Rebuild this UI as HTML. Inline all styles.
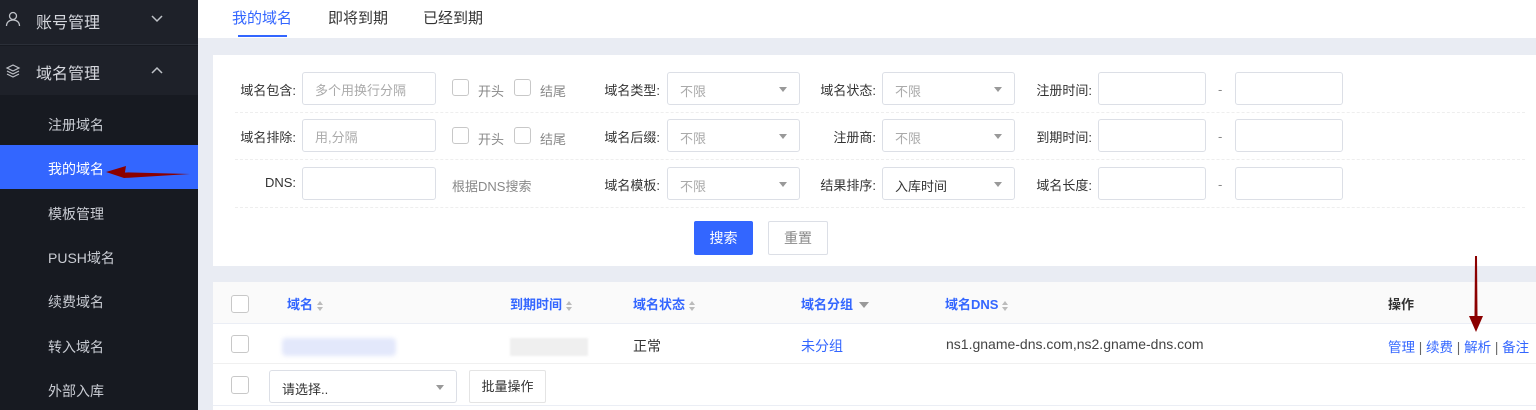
<!DOCTYPE html>
<html><head><meta charset="utf-8"><style>
*{margin:0;padding:0;box-sizing:border-box}
body{width:1536px;height:410px;overflow:hidden;background:#e9ecf3;font-family:"Liberation Sans","Noto Sans CJK SC",sans-serif;font-size:13px;color:#333;position:relative}
.a{position:absolute}
.side{left:0;top:0;width:198px;height:410px;background:#171a21}
.sh{left:0;width:198px;background:#1e2129;color:#d6d8de;font-size:16px}
.si{left:48px;color:#c9ccd3;font-size:14px}
.top{left:198px;top:0;width:1338px;height:38px;background:#fff}
.card{background:#fff}
.lb{font-size:13px;color:#333;text-align:right}
.in{border:1px solid #dcdfe6;border-radius:3px;background:#fff;height:33px;color:#aaa;font-size:13px;padding:7px 12px}
.cb{width:17px;height:17px;border:1px solid #c8c8c8;border-radius:3px;background:#fff}
.sel{border:1px solid #dcdfe6;border-radius:3px;height:33px;background:#fff;color:#aaa;padding:8px 12px}
.sel:after{content:"";position:absolute;right:12px;top:14px;border:4px solid transparent;border-top:5px solid #999}
.th{color:#3366ff;font-weight:bold;font-size:13px}
.sort{display:inline-block;width:0;height:0;vertical-align:middle;margin-left:4px;border:3px solid transparent;border-bottom:4px solid #bbb;position:relative;top:-4px}
.sort:after{content:"";position:absolute;left:-3px;top:6px;border:3px solid transparent;border-top:4px solid #bbb}
</style></head><body>
<div class="a side"></div>
<div class="a sh" style="top:0;height:45px;border-bottom:1px solid #2b2f38"></div>
<div class="a sh" style="top:46px;height:49px"></div>
<svg class="a" style="left:5px;top:11px" width="16" height="16" viewBox="0 0 16 16" fill="none" stroke="#bfc2c8" stroke-width="1.3"><circle cx="8" cy="5" r="3.5"/><path d="M1.5 15c0-4 3-6 6.5-6s6.5 2 6.5 6"/></svg>
<div class="a" style="left:36px;top:9px;color:#d6d8de;font-size:16px">账号管理</div>
<svg class="a" style="left:150px;top:14px" width="14" height="10"><path d="M2 2l5 5 5-5" stroke="#bfc2c8" stroke-width="1.5" fill="none"/></svg>
<svg class="a" style="left:5px;top:63px" width="16" height="16" viewBox="0 0 16 16" fill="none" stroke="#bfc2c8" stroke-width="1.2"><path d="M8 2l6 3-6 3-6-3z"/><path d="M2 8l6 3 6-3"/><path d="M2 11l6 3 6-3"/></svg>
<div class="a" style="left:36px;top:60px;color:#d6d8de;font-size:16px">域名管理</div>
<svg class="a" style="left:150px;top:66px" width="14" height="10"><path d="M2 7l5-5 5 5" stroke="#bfc2c8" stroke-width="1.5" fill="none"/></svg>
<div class="a si" style="top:115px">注册域名</div>
<div class="a" style="left:0;top:145px;width:198px;height:44px;background:#3366ff"></div>
<div class="a si" style="top:159px;color:#fff">我的域名</div>
<svg class="a" style="left:102px;top:164px" width="92" height="16"><path d="M8 8 L88 10 L22 14 Z M4 8 L24 2 L22 14 Z" fill="#8b0000"/></svg>
<div class="a si" style="top:204px">模板管理</div>
<div class="a si" style="top:248px">PUSH域名</div>
<div class="a si" style="top:292px">续费域名</div>
<div class="a si" style="top:337px">转入域名</div>
<div class="a si" style="top:381px">外部入库</div>

<div class="a top"></div>
<div class="a" style="left:232px;top:7px;font-size:15px;color:#3366ff">我的域名</div>
<div class="a" style="left:238px;top:35px;width:49px;height:2px;background:#3366ff"></div>
<div class="a" style="left:328px;top:7px;font-size:15px;color:#333">即将到期</div>
<div class="a" style="left:423px;top:7px;font-size:15px;color:#333">已经到期</div>

<div class="a card" style="left:213px;top:55px;width:1323px;height:211px"></div>
<div class="a" style="left:235px;top:112px;width:1290px;border-top:1px dashed #eee"></div>
<div class="a" style="left:235px;top:159px;width:1290px;border-top:1px dashed #eee"></div>
<div class="a" style="left:235px;top:207px;width:1290px;border-top:1px dashed #eee"></div>

<div class="a lb" style="left:220px;top:80px;width:76px">域名包含:</div>
<div class="a in" style="left:302px;top:72px;width:134px">多个用换行分隔</div>
<div class="a lb" style="left:220px;top:127px;width:76px">域名排除:</div>
<div class="a in" style="left:302px;top:119px;width:134px">用,分隔</div>
<div class="a lb" style="left:220px;top:175px;width:76px">DNS:</div>
<div class="a in" style="left:302px;top:167px;width:134px"></div>

<div class="a cb" style="left:452px;top:79px"></div><div class="a" style="left:478px;top:81px;color:#888">开头</div>
<div class="a cb" style="left:514px;top:79px"></div><div class="a" style="left:540px;top:81px;color:#888">结尾</div>
<div class="a cb" style="left:452px;top:127px"></div><div class="a" style="left:478px;top:129px;color:#888">开头</div>
<div class="a cb" style="left:514px;top:127px"></div><div class="a" style="left:540px;top:129px;color:#888">结尾</div>
<div class="a" style="left:452px;top:176px;color:#888">根据DNS搜索</div>

<div class="a lb" style="left:590px;top:80px;width:70px">域名类型:</div>
<div class="a sel" style="left:667px;top:72px;width:133px">不限</div>
<div class="a lb" style="left:590px;top:127px;width:70px">域名后缀:</div>
<div class="a sel" style="left:667px;top:119px;width:133px">不限</div>
<div class="a lb" style="left:590px;top:175px;width:70px">域名模板:</div>
<div class="a sel" style="left:667px;top:167px;width:133px">不限</div>

<div class="a lb" style="left:806px;top:80px;width:70px">域名状态:</div>
<div class="a sel" style="left:882px;top:72px;width:133px">不限</div>
<div class="a lb" style="left:806px;top:127px;width:70px">注册商:</div>
<div class="a sel" style="left:882px;top:119px;width:133px">不限</div>
<div class="a lb" style="left:806px;top:175px;width:70px">结果排序:</div>
<div class="a sel" style="left:882px;top:167px;width:133px;color:#333">入库时间</div>

<div class="a lb" style="left:1020px;top:80px;width:72px">注册时间:</div>
<div class="a lb" style="left:1020px;top:127px;width:72px">到期时间:</div>
<div class="a lb" style="left:1020px;top:175px;width:72px">域名长度:</div>
<div class="a in" style="left:1098px;top:72px;width:108px"></div><div class="a" style="left:1218px;top:82px;color:#888">-</div><div class="a in" style="left:1235px;top:72px;width:108px"></div>
<div class="a in" style="left:1098px;top:119px;width:108px"></div><div class="a" style="left:1218px;top:129px;color:#888">-</div><div class="a in" style="left:1235px;top:119px;width:108px"></div>
<div class="a in" style="left:1098px;top:167px;width:108px"></div><div class="a" style="left:1218px;top:177px;color:#888">-</div><div class="a in" style="left:1235px;top:167px;width:108px"></div>

<div class="a" style="left:694px;top:221px;width:59px;height:34px;background:#3366ff;border-radius:2px;color:#fff;text-align:center;line-height:34px;font-size:14px">搜索</div>
<div class="a" style="left:768px;top:221px;width:60px;height:34px;border:1px solid #dcdfe6;border-radius:2px;color:#888;text-align:center;line-height:32px;font-size:14px">重置</div>

<div class="a card" style="left:213px;top:282px;width:1323px;height:128px"></div>
<div class="a" style="left:213px;top:282px;width:1323px;height:42px;background:#fafafa;border-bottom:1px solid #ebeef5"></div>
<div class="a" style="left:213px;top:363px;width:1323px;border-top:1px solid #f0f0f0"></div>
<div class="a" style="left:213px;top:405px;width:1323px;border-top:1px solid #ebeef5"></div>
<div class="a cb" style="left:231px;top:295px;width:18px;height:18px"></div>
<div class="a cb" style="left:231px;top:335px;width:18px;height:18px"></div>
<div class="a cb" style="left:231px;top:376px;width:18px;height:18px"></div>
<div class="a th" style="left:287px;top:294px">域名<span class="sort"></span></div>
<div class="a th" style="left:510px;top:294px">到期时间<span class="sort"></span></div>
<div class="a th" style="left:633px;top:294px">域名状态<span class="sort"></span></div>
<div class="a th" style="left:801px;top:294px">域名分组<span style="display:inline-block;margin-left:6px;border:5px solid transparent;border-top:6px solid #999;vertical-align:middle;position:relative;top:2px"></span></div>
<div class="a th" style="left:945px;top:294px">域名DNS<span class="sort"></span></div>
<div class="a" style="left:1388px;top:294px;font-weight:bold;color:#333">操作</div>
<div class="a" style="left:282px;top:338px;width:114px;height:18px;background:#e3e8fb;border-radius:4px;filter:blur(2px)"></div>
<div class="a" style="left:510px;top:338px;width:78px;height:18px;background:#efefef;filter:blur(1px)"></div>
<div class="a" style="left:633px;top:336px;font-size:14px">正常</div>
<div class="a" style="left:801px;top:336px;font-size:14px;color:#3366ff">未分组</div>
<div class="a" style="left:946px;top:336px;font-size:14px;color:#444">ns1.gname-dns.com,ns2.gname-dns.com</div>
<div class="a" style="left:1388px;top:336px;font-size:13.5px;color:#3366ff;white-space:nowrap">管理 <span style="color:#666">|</span> 续费 <span style="color:#666">|</span> 解析 <span style="color:#666">|</span> 备注</div>
<svg class="a" style="left:1468px;top:256px" width="16" height="76"><path d="M7 0 L9 0 L9.5 60 L15 60 L8 76 L1 60 L6.5 60 Z" fill="#8b0000"/></svg>
<div class="a sel" style="left:269px;top:370px;width:188px;color:#333">请选择..</div>
<div class="a" style="left:469px;top:370px;width:77px;height:33px;border:1px solid #e4e4e4;border-radius:2px;text-align:center;line-height:31px;color:#333">批量操作</div>
</body></html>
